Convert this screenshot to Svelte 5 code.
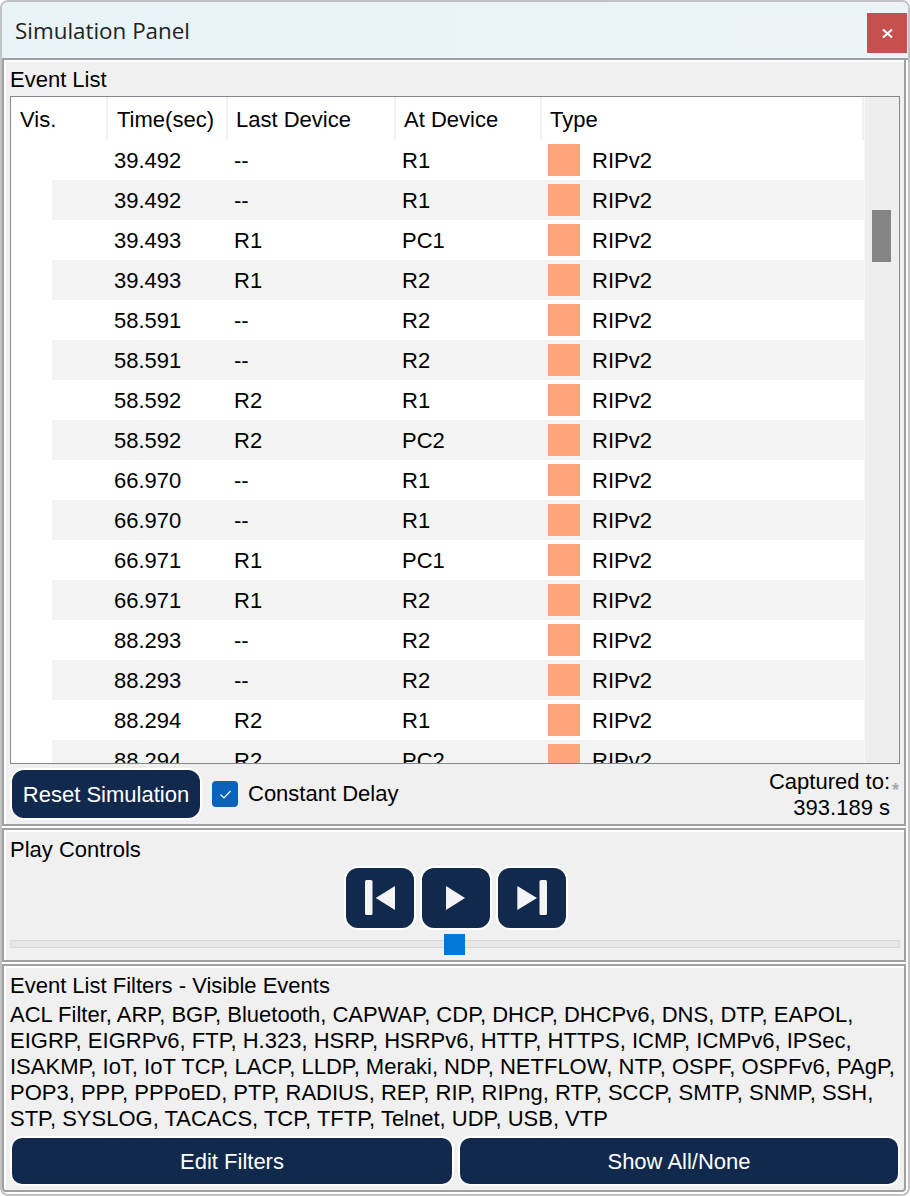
<script lang="ts">
	const times = [
		['39.492', '--', 'R1'],
		['39.492', '--', 'R1'],
		['39.493', 'R1', 'PC1'],
		['39.493', 'R1', 'R2'],
		['58.591', '--', 'R2'],
		['58.591', '--', 'R2'],
		['58.592', 'R2', 'R1'],
		['58.592', 'R2', 'PC2'],
		['66.970', '--', 'R1'],
		['66.970', '--', 'R1'],
		['66.971', 'R1', 'PC1'],
		['66.971', 'R1', 'R2'],
		['88.293', '--', 'R2'],
		['88.293', '--', 'R2'],
		['88.294', 'R2', 'R1'],
		['88.294', 'R2', 'PC2']
	];
</script>

<div class="window">
	<header class="titlebar">
		<span class="title">Simulation Panel</span>
		<button class="close" type="button" aria-label="Close">
			<svg width="11" height="11" viewBox="0 0 11 11"><path d="M1 1.5l9 8M10 1.5l-9 8" stroke="#fff" stroke-width="2" /></svg>
		</button>
	</header>

	<section class="panel events">
		<div class="label">Event List</div>
		<div class="table">
			<div class="content">
				<div class="thead">
					<div class="th vis">Vis.</div>
					<div class="th time">Time(sec)</div>
					<div class="th last">Last Device</div>
					<div class="th at">At Device</div>
					<div class="th type">Type</div>
				</div>
				<div class="rows">
					{#each times as row, i}
						<div class="row" class:alt={i % 2 === 1}>
							<div class="cell time">{row[0]}</div>
							<div class="cell last">{row[1]}</div>
							<div class="cell at">{row[2]}</div>
							<div class="cell type"><span class="swatch"></span>RIPv2</div>
						</div>
					{/each}
				</div>
			</div>
			<div class="scrollbar"><div class="thumb"></div></div>
		</div>
		<div class="actions">
			<button class="btn reset" type="button">Reset Simulation</button>
			<span class="check">
				<svg width="13" height="11" viewBox="0 0 13 11"><path d="M1.5 5.5l3.5 3.5 6.5-7" fill="none" stroke="#fff" stroke-width="1.2" /></svg>
			</span>
			<span class="check-label">Constant Delay</span>
			<div class="captured">
				<div>Captured to:</div>
				<div>393.189 s</div>
				<span class="star">*</span>
			</div>
		</div>
	</section>

	<section class="panel play">
		<div class="label">Play Controls</div>
		<div class="controls">
			<button class="btn ctrl" type="button" aria-label="Back">
				<svg width="36" height="36" viewBox="0 0 36 36"><rect x="3" y="0" width="7.5" height="35" rx="1.5" fill="#f4f4f6" /><path d="M13.7 18L33 6v24z" fill="#f4f4f6" /></svg>
			</button>
			<button class="btn ctrl" type="button" aria-label="Play">
				<svg width="36" height="36" viewBox="0 0 36 36"><path d="M8 6l19 12L8 30z" fill="#f4f4f6" /></svg>
			</button>
			<button class="btn ctrl" type="button" aria-label="Forward">
				<svg width="36" height="36" viewBox="0 0 36 36"><path d="M3.3 6L23 18 3.3 30z" fill="#f4f4f6" /><rect x="25.5" y="0" width="7.5" height="35" rx="1.5" fill="#f4f4f6" /></svg>
			</button>
		</div>
		<div class="slider">
			<div class="track"></div>
			<div class="handle"></div>
		</div>
	</section>

	<section class="panel filters">
		<div class="label">Event List Filters - Visible Events</div>
		<p class="list">ACL Filter, ARP, BGP, Bluetooth, CAPWAP, CDP, DHCP, DHCPv6, DNS, DTP, EAPOL, EIGRP, EIGRPv6, FTP, H.323, HSRP, HSRPv6, HTTP, HTTPS, ICMP, ICMPv6, IPSec, ISAKMP, IoT, IoT TCP, LACP, LLDP, Meraki, NDP, NETFLOW, NTP, OSPF, OSPFv6, PAgP, POP3, PPP, PPPoED, PTP, RADIUS, REP, RIP, RIPng, RTP, SCCP, SMTP, SNMP, SSH, STP, SYSLOG, TACACS, TCP, TFTP, Telnet, UDP, USB, VTP</p>
		<div class="filter-btns">
			<button class="btn wide" type="button">Edit Filters</button>
			<button class="btn wide" type="button">Show All/None</button>
		</div>
	</section>
</div>

<style>
	:global(body) {
		margin: 0;
		background: #fff;
	}

	.window {
		position: relative;
		width: 910px;
		height: 1196px;
		box-sizing: border-box;
		display: flex;
		flex-direction: column;
		border: 2px solid #c0c2c4;
		border-radius: 8px;
		background: #fff;
		font-family: 'Liberation Sans', Arial, sans-serif;
		font-size: 22px;
		color: #000;
		overflow: hidden;
	}

	/* slivers of the dark app behind the window edge */
	.window::before,
	.window::after {
		content: '';
		position: absolute;
		top: 76px;
		width: 2px;
		height: 62px;
		background: #3a4a66;
	}

	.window::before {
		left: -2px;
	}

	.window::after {
		right: -2px;
	}

	.titlebar {
		height: 56px;
		flex: none;
		display: flex;
		align-items: flex-start;
		justify-content: space-between;
		background: linear-gradient(90deg, #e8f4f7, #ecf4f8);
		border-bottom: 2px solid #a0a0a0;
		box-sizing: content-box;
	}

	.title {
		margin: 14px 0 0 13px;
		font-family: 'Open Sans', sans-serif;
		font-size: 22.4px;
		line-height: 30px;
		color: #222;
	}

	.close {
		width: 40px;
		height: 40px;
		margin: 11px 1px 0 0;
		padding: 0;
		border: 0;
		background: #c65050;
		display: flex;
		align-items: center;
		justify-content: center;
	}

	.panel {
		box-sizing: border-box;
		flex: none;
		width: 904px;
		padding: 0 4px 0 6px;
		background: #f0f0f0;
		border: 2px solid #a0a0a0;
		box-shadow: inset 2px 2px 0 #fff;
	}

	.label {
		height: 24px;
		line-height: 24px;
	}

	.filters .label {
		line-height: 26px;
	}

	.events {
		height: 766px;
		padding-top: 8px;
		border-top: 0;
	}

	.table {
		margin-top: 4px;
		height: 668px;
		box-sizing: border-box;
		border: 1px solid #808890;
		background: #fff;
		display: flex;
		overflow: hidden;
	}

	.content {
		width: 853px;
		flex: none;
	}

	.thead {
		display: flex;
		height: 43px;
		align-items: stretch;
	}

	.th {
		box-sizing: border-box;
		padding: 11px 0 0 9px;
		line-height: 24px;
		border-right: 2px solid #f0f0f0;
	}

	.th.vis {
		width: 97px;
	}

	.th.time {
		width: 120px;
	}

	.th.last {
		width: 168px;
		padding-left: 8px;
	}

	.th.at {
		width: 146px;
		padding-left: 8px;
	}

	.th.type {
		flex: 1;
		padding-left: 8px;
	}

	.rows {
		height: 623px;
		overflow: hidden;
	}

	.row {
		display: flex;
		height: 40px;
		line-height: 42px;
		margin-left: 41px;
	}

	.row.alt {
		background: #f4f4f4;
	}

	.cell {
		box-sizing: border-box;
		flex: none;
	}

	.cell.time {
		padding-left: 62px;
		width: 182px;
	}

	.cell.last {
		width: 168px;
	}

	.cell.at {
		width: 146px;
	}

	.cell.type {
		display: flex;
		align-items: flex-start;
	}

	.swatch {
		width: 32px;
		height: 32px;
		background: #ffa57c;
		margin: 4px 12px 0 0;
	}

	.scrollbar {
		flex: 1;
		background: #eeeeee;
		border-left: 1px solid #f8f8f8;
		padding-top: 113px;
	}

	.thumb {
		width: 19px;
		height: 52px;
		margin-left: 7px;
		background: #858585;
	}

	.btn {
		background: #10294d;
		color: #fff;
		border: 2px solid #fff;
		font-family: inherit;
		font-size: 22px;
		padding: 2px 0 0;
		box-sizing: border-box;
	}

	.actions {
		position: relative;
		display: flex;
		align-items: center;
		height: 60px;
	}

	.reset {
		width: 192px;
		height: 52px;
		border-radius: 14px;
	}

	.check {
		width: 26px;
		height: 26px;
		margin-left: 10px;
		border-radius: 4px;
		background: #0a62bb;
		display: flex;
		align-items: center;
		justify-content: center;
	}

	.check-label {
		margin-left: 10px;
	}

	.captured {
		position: absolute;
		right: 10px;
		top: 5px;
		text-align: right;
		line-height: 26px;
	}

	.star {
		position: absolute;
		right: -9px;
		top: 8px;
		color: #a8a8a8;
		font-size: 18px;
		font-weight: bold;
	}

	.play {
		margin-top: 2px;
		height: 134px;
		padding-top: 8px;
	}

	.controls {
		display: flex;
		justify-content: center;
		gap: 4px;
		margin-top: 4px;
		padding-left: 2px;
	}

	.ctrl {
		width: 72px;
		height: 64px;
		padding: 0;
		border-radius: 14px;
		display: flex;
		align-items: center;
		justify-content: center;
	}

	.slider {
		position: relative;
		margin-top: 4px;
		height: 21px;
	}

	.track {
		position: relative;
		top: 6px;
		height: 8px;
		box-sizing: border-box;
		background: #e6e7e7;
		border: 1px solid #d6d9d9;
	}

	.handle {
		position: absolute;
		left: 434px;
		top: 0;
		width: 21px;
		height: 21px;
		background: #0078d7;
	}

	.filters {
		margin-top: 2px;
		height: 228px;
		padding-top: 7px;
		border-radius: 0 0 4px 4px;
	}

	.list {
		margin: 5px 0 0;
		line-height: 26px;
	}

	.filter-btns {
		display: grid;
		grid-template-columns: 444px 442px;
		gap: 4px;
		margin-top: 4px;
	}

	.wide {
		height: 50px;
		border-radius: 12px;
	}
</style>
